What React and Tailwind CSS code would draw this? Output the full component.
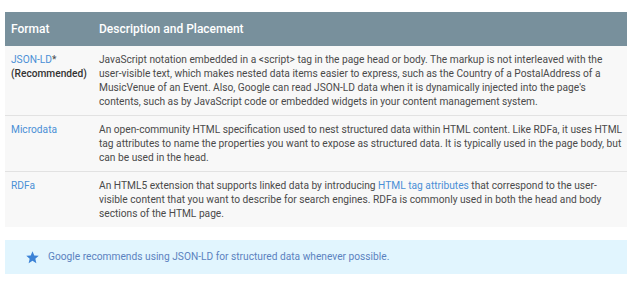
const Lines = ({ lines }) => (
  <>
    {lines.map((l, i) => (
      <div key={i} className="whitespace-nowrap">
        {l}
      </div>
    ))}
  </>
);

export default function App() {
  const rows = [
    {
      name: 'JSON-LD',
      extra: true,
      lines: [
        'JavaScript notation embedded in a <script> tag in the page head or body. The markup is not interleaved with the',
        'user-visible text, which makes nested data items easier to express, such as the Country of a PostalAddress of a',
        "MusicVenue of an Event. Also, Google can read JSON-LD data when it is dynamically injected into the page's",
        'contents, such as by JavaScript code or embedded widgets in your content management system.',
      ],
    },
    {
      name: 'Microdata',
      lines: [
        'An open-community HTML specification used to nest structured data within HTML content. Like RDFa, it uses HTML',
        'tag attributes to name the properties you want to expose as structured data. It is typically used in the page body, but',
        'can be used in the head.',
      ],
    },
    {
      name: 'RDFa',
      lines: [
        <>
          An HTML5 extension that supports linked data by introducing{' '}
          <span className="text-[#4a8fd6]">HTML tag attributes</span> that correspond to the user-
        </>,
        'visible content that you want to describe for search engines. RDFa is commonly used in both the head and body',
        'sections of the HTML page.',
      ],
    },
  ];

  return (
    <div className="w-[640px] h-[285px] bg-white pt-[12px] px-[5px] font-['Roboto',sans-serif] text-[10.2px] leading-[14px] text-[#4a4a4a]">
      <div className="w-[622px]">
        {/* Header */}
        <div className="flex h-[34px] items-center bg-[#78909c] text-white text-[12px] font-medium">
          <div className="w-[94px] pl-[6px]">Format</div>
          <div>Description and Placement</div>
        </div>

        {/* Rows */}
        {rows.map((r, i) => (
          <div
            key={r.name}
            className={`flex bg-[#f8f8f8] pt-[7px] pb-[6px] ${i > 0 ? 'border-t border-[#e2e2e2]' : ''}`}
          >
            <div className="w-[94px] shrink-0 pl-[6px]">
              <span className="text-[#4a8fd6]">{r.name}</span>
              {r.extra && (
                <>
                  <span className="text-[#4a4a4a]">*</span>
                  <div className="font-medium text-[#333]">(Recommended)</div>
                </>
              )}
            </div>
            <div className="pr-[6px]">
              <Lines lines={r.lines} />
            </div>
          </div>
        ))}

        {/* Note */}
        <div className="mt-[13px] flex h-[34px] items-center bg-[#e1f5fe] pl-[20px] text-[#5b82bf]">
          <svg width="15" height="15" viewBox="0 0 24 24" className="mr-[8px]">
            <path
              fill="#3b82d6"
              d="M12 17.27L18.18 21l-1.64-7.03L22 9.24l-7.19-.61L12 2 9.19 8.63 2 9.24l5.46 4.73L5.82 21z"
            />
          </svg>
          Google recommends using JSON-LD for structured data whenever possible.
        </div>
      </div>
    </div>
  );
}
